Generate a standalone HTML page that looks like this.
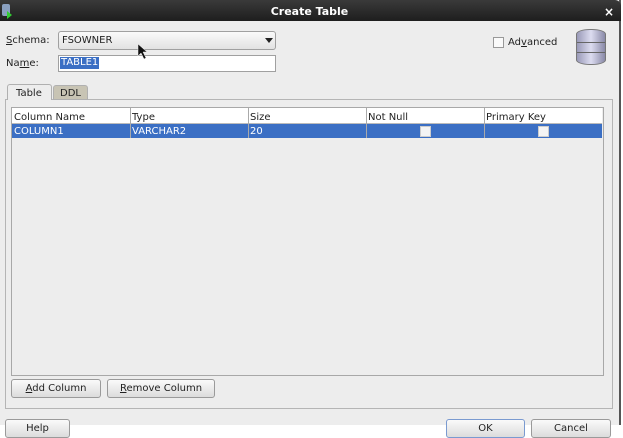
<!DOCTYPE html><html><head><style>
body{margin:0;width:623px;height:425px;overflow:hidden;background:#fff;font-family:"DejaVu Sans","Liberation Sans",sans-serif;font-size:10px;color:#222;position:relative}
div{position:absolute;box-sizing:border-box}
.t{white-space:nowrap}
.btn{border:1px solid #9a9a9a;border-radius:3px;background:linear-gradient(#fafafa,#dcdcdc);text-align:center;line-height:17px}
</style></head><body>
<div style="left:0;top:0;width:621px;height:425px;background:#ededed;border-right:2px solid #555"></div>
<div style="left:0;top:0;width:621px;height:21px;background:linear-gradient(#3a3a3a,#1e1e1e);border-radius:0 6px 0 0"></div>
<div style="left:2px;top:4px;width:8px;height:12px;background:#8aa0c0;border-radius:2px"></div>
<div style="left:7px;top:11px;width:0;height:0;border-left:5px solid #3c3;border-top:4px solid transparent;border-bottom:4px solid transparent"></div>
<div class="t" style="left:0;top:5px;width:619px;text-align:center;color:#fff;font-weight:bold;font-size:11px">Create Table</div>
<div class="t" style="left:604px;top:5px;color:#fff;font-weight:bold;font-size:12px">×</div>
<div class="t" style="left:6px;top:35px"><u>S</u>chema:</div>
<div class="t" style="left:6px;top:58px">Na<u>m</u>e:</div>
<div style="left:58px;top:31px;width:218px;height:19px;border:1px solid #a0a0a0;border-radius:3px;background:linear-gradient(#fafafa,#e2e2e2)"></div>
<div class="t" style="left:62px;top:35px">FSOWNER</div>
<div style="left:265px;top:38px;border-top:5px solid #222;border-left:4px solid transparent;border-right:4px solid transparent"></div>
<div style="left:58px;top:55px;width:218px;height:17px;border:1px solid #a0a0a0;background:#fff"></div>
<div class="t" style="left:60px;top:57px;background:#3b6fc4;color:#fff;padding:0 1px;line-height:12px">TABLE1</div>
<div style="left:493px;top:37px;width:11px;height:11px;border:1px solid #999;background:#fafafa"></div>
<div class="t" style="left:508px;top:37px">Ad<u>v</u>anced</div>
<div style="left:576px;top:29px;width:30px;height:36px;border:1px solid #777;border-radius:14px/5px;background:linear-gradient(90deg,#9a9ab8,#dcdcf0,#8a8aa8)"></div>
<div style="left:577px;top:42px;width:28px;height:1px;background:#666"></div>
<div style="left:577px;top:52px;width:28px;height:1px;background:#666"></div>
<div style="left:5px;top:99px;width:608px;height:310px;border:1px solid #b5b5b5"></div>
<div style="left:7px;top:84px;width:45px;height:16px;border:1px solid #b0b0b0;border-bottom:none;background:#ededed;border-radius:3px 3px 0 0"></div>
<div class="t" style="left:16px;top:88px">Table</div>
<div style="left:53px;top:85px;width:35px;height:15px;border:1px solid #b0b0b0;background:#c8c4b4;border-radius:3px 3px 0 0"></div>
<div class="t" style="left:60px;top:88px">DDL</div>
<div style="left:11px;top:107px;width:593px;height:269px;border:1px solid #a8a8a8;background:#ededed"></div>
<div style="left:12px;top:108px;width:590px;height:16px;background:#fff;border-bottom:1px solid #bbb"></div>
<div style="left:12px;top:124px;width:590px;height:14px;background:#3b6fc4"></div>
<div style="left:130px;top:108px;width:1px;height:30px;background:#aaa"></div>
<div style="left:248px;top:108px;width:1px;height:30px;background:#aaa"></div>
<div style="left:366px;top:108px;width:1px;height:30px;background:#aaa"></div>
<div style="left:484px;top:108px;width:1px;height:30px;background:#aaa"></div>
<div class="t" style="left:14px;top:112px">Column Name</div>
<div class="t" style="left:132px;top:112px">Type</div>
<div class="t" style="left:250px;top:112px">Size</div>
<div class="t" style="left:368px;top:112px">Not Null</div>
<div class="t" style="left:486px;top:112px">Primary Key</div>
<div class="t" style="left:14px;top:126px;color:#fff">COLUMN1</div>
<div class="t" style="left:132px;top:126px;color:#fff">VARCHAR2</div>
<div class="t" style="left:250px;top:126px;color:#fff">20</div>
<div style="left:420px;top:126px;width:11px;height:11px;background:#f4f4f4;border:1px solid #ccc"></div>
<div style="left:538px;top:126px;width:11px;height:11px;background:#f4f4f4;border:1px solid #ccc"></div>
<div class="btn" style="left:11px;top:379px;width:90px;height:19px;line-height:18px"><u>A</u>dd Column</div>
<div class="btn" style="left:107px;top:379px;width:108px;height:19px;line-height:18px"><u>R</u>emove Column</div>
<div class="btn" style="left:5px;top:419px;width:65px;height:19px">Help</div>
<div class="btn" style="left:446px;top:419px;width:79px;height:19px;border-color:#7a9ad0">OK</div>
<div class="btn" style="left:531px;top:419px;width:80px;height:19px">Cancel</div>
<svg style="position:absolute;left:137px;top:43px" width="12" height="18"><path d="M1 1 L1 13 L4 10 L7 16 L9 15 L6 9 L10 9 Z" fill="#111" stroke="#eee" stroke-width="0.5"/></svg>
</body></html>
